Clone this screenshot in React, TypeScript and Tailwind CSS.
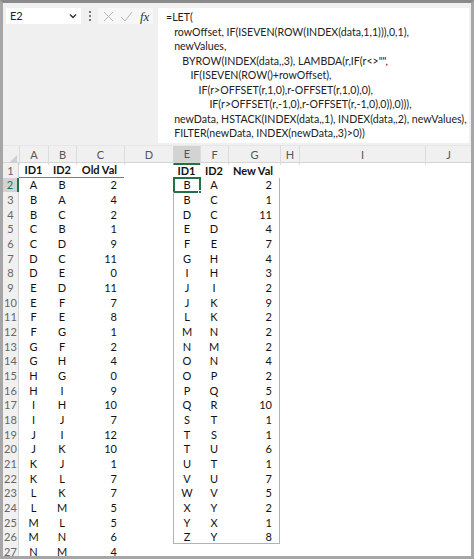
import React from 'react';

const oldRows = [
  ['A', 'B', '2'], ['B', 'A', '4'], ['B', 'C', '2'], ['C', 'B', '1'], ['C', 'D', '9'],
  ['D', 'C', '11'], ['D', 'E', '0'], ['E', 'D', '11'], ['E', 'F', '7'], ['F', 'E', '8'],
  ['F', 'G', '1'], ['G', 'F', '2'], ['G', 'H', '4'], ['H', 'G', '0'], ['H', 'I', '9'],
  ['I', 'H', '10'], ['I', 'J', '7'], ['J', 'I', '12'], ['J', 'K', '10'], ['K', 'J', '1'],
  ['K', 'L', '7'], ['L', 'K', '7'], ['L', 'M', '5'], ['M', 'L', '5'], ['M', 'N', '6'],
  ['N', 'M', '4'],
];

const newRows = [
  ['B', 'A', '2'], ['B', 'C', '1'], ['D', 'C', '11'], ['E', 'D', '4'], ['F', 'E', '7'],
  ['G', 'H', '4'], ['I', 'H', '3'], ['J', 'I', '2'], ['J', 'K', '9'], ['L', 'K', '2'],
  ['M', 'N', '2'], ['N', 'M', '2'], ['O', 'N', '4'], ['O', 'P', '2'], ['P', 'Q', '5'],
  ['Q', 'R', '10'], ['S', 'T', '1'], ['T', 'S', '1'], ['T', 'U', '6'], ['U', 'T', '1'],
  ['V', 'U', '7'], ['W', 'V', '5'], ['X', 'Y', '2'], ['Y', 'X', '1'], ['Z', 'Y', '8'],
];

const formula = [
  '=LET(',
  '   rowOffset, IF(ISEVEN(ROW(INDEX(data,1,1))),0,1),',
  '   newValues,',
  '      BYROW(INDEX(data,,3), LAMBDA(r,IF(r<>"",',
  '         IF(ISEVEN(ROW()+rowOffset),',
  '            IF(r>OFFSET(r,1,0),r-OFFSET(r,1,0),0),',
  '                IF(r>OFFSET(r,-1,0),r-OFFSET(r,-1,0),0)),0))),',
  '   newData, HSTACK(INDEX(data,,1), INDEX(data,,2), newValues),',
  '   FILTER(newData, INDEX(newData,,3)>0))',
];

const grid = 'grid grid-cols-[16px_29px_28px_48px_49px_27px_28px_52px_19px_126px_1fr]';
const letters = ['A', 'B', 'C', 'D', 'E', 'F', 'G', 'H', 'I', 'J'];

function FormulaBar() {
  return (
    <div className="flex items-start h-[142px] bg-[#f0f0f0] pl-[3px] pr-[2px] pt-[5px]">
      <div className="flex items-center justify-between w-[75px] h-[16px] bg-white pl-[4px] pr-[4px] text-[11px] text-[#222]">
        <span>E2</span>
        <svg width="8" height="6" viewBox="0 0 8 6">
          <path d="M1 1.5 L4 4.5 L7 1.5" fill="none" stroke="#333" strokeWidth="1.4" />
        </svg>
      </div>
      <div className="flex flex-col items-center justify-center gap-[2px] w-[17px] h-[16px]">
        <span className="w-[2px] h-[2px] bg-[#777]" />
        <span className="w-[2px] h-[2px] bg-[#777]" />
        <span className="w-[2px] h-[2px] bg-[#777]" />
      </div>
      <div className="flex items-center w-[55px] h-[16px] bg-[#f7f7f7] pl-[5px]">
        <svg width="11" height="11" viewBox="0 0 11 11">
          <path d="M1 1 L10 10 M10 1 L1 10" stroke="#b5b5b5" strokeWidth="1" />
        </svg>
        <svg width="13" height="11" viewBox="0 0 13 11" className="ml-[6px]">
          <path d="M1 6 L5 10 L12 1" fill="none" stroke="#b5b5b5" strokeWidth="1" />
        </svg>
        <span className="ml-[7px] text-[13px] italic text-[#333] leading-none font-['Liberation_Serif',serif]">fx</span>
      </div>
      <div className="ml-[5px] flex-1 h-[135px] bg-white pl-[8px] pt-[2px] text-[10.6px] leading-[14.5px] text-[#222] whitespace-pre overflow-hidden">
        {formula.map((l, i) => (
          <div key={i}>{l}</div>
        ))}
      </div>
    </div>
  );
}

function HeaderRow() {
  return (
    <div className={`${grid} h-[17px] bg-[#f0f0f0] border-b border-[#d4d4d4] text-[11px] text-[#555]`}>
      <div className="relative">
        <svg width="8" height="8" viewBox="0 0 8 8" className="absolute right-[2px] bottom-[2px]">
          <path d="M8 0 L8 8 L0 8 Z" fill="#cfcfcf" />
        </svg>
      </div>
      {letters.map((c) => (
        <div
          key={c}
          className={
            c === 'E'
              ? 'flex items-center justify-center bg-[#d3d3d3] border-b-2 border-[#217346] border-l border-l-[#d4d4d4]'
              : 'flex items-center justify-center border-l border-[#dcdcdc]'
          }
        >
          {c}
        </div>
      ))}
    </div>
  );
}

function Row({ n }: { n: number }) {
  const o = n >= 2 ? oldRows[n - 2] : null;
  const r = n >= 2 && n <= 26 ? newRows[n - 2] : null;
  const spill = n >= 2 && n <= 26;
  const last = n === 26;
  const head = n === 1;
  return (
    <div className={`${grid} h-[14.67px] text-[11px] leading-none text-[#111]`}>
      <div
        className={
          n === 2
            ? 'flex items-center justify-center bg-[#d3d3d3] border-r-2 border-[#217346] text-[#217346]'
            : 'flex items-center justify-center bg-[#f0f0f0] border-r border-[#d4d4d4] text-[#666]'
        }
      >
        {n}
      </div>
      <div className={`flex items-center justify-center ${head ? 'font-bold border-b border-[#7a7a7a]' : ''}`}>
        {head ? 'ID1' : o?.[0]}
      </div>
      <div className={`flex items-center justify-center ${head ? 'font-bold border-b border-[#7a7a7a]' : ''}`}>
        {head ? 'ID2' : o?.[1]}
      </div>
      <div className={`flex items-center justify-end pr-[7px] ${head ? 'font-bold border-b border-[#7a7a7a]' : ''}`}>
        {head ? 'Old Val' : o?.[2]}
      </div>
      <div />
      <div
        className={`relative flex items-center justify-center ${head ? 'font-bold' : ''} ${
          spill ? 'border-l border-[#9bb5de]' : ''
        } ${last ? 'border-b border-[#9bb5de]' : ''}`}
      >
        {head ? 'ID1' : r?.[0]}
        {n === 2 && (
          <div className="absolute -left-[1px] -top-[1px] w-[28px] h-[16px] border-2 border-[#217346]">
            <div className="absolute -right-[3px] -bottom-[3px] w-[4px] h-[4px] bg-[#217346] border border-white" />
          </div>
        )}
      </div>
      <div
        className={`flex items-center justify-center ${head ? 'font-bold' : ''} ${
          last ? 'border-b border-[#9bb5de]' : ''
        }`}
      >
        {head ? 'ID2' : r?.[1]}
      </div>
      <div
        className={`flex items-center justify-end pr-[7px] ${head ? 'font-bold' : ''} ${
          spill ? 'border-r border-[#9bb5de]' : ''
        } ${last ? 'border-b border-[#9bb5de]' : ''}`}
      >
        {head ? 'New Val' : r?.[2]}
      </div>
      <div />
      <div />
      <div />
    </div>
  );
}

export default function App() {
  const rows = Array.from({ length: 27 }, (_, i) => i + 1);
  return (
    <div className="w-[474px] h-[559px] overflow-hidden bg-white border-t-[3px] border-t-[#8a8a8a] border-l-[3px] border-l-[#a6a6a6] border-r-[3px] border-r-[#a6a6a6] border-b-[3px] border-b-[#a6a6a6] font-['Lato','Open_Sans',sans-serif]">
      <FormulaBar />
      <div className="h-[1px] bg-[#e6e6e6]" />
      <HeaderRow />
      {rows.map((n) => (
        <Row key={n} n={n} />
      ))}
    </div>
  );
}
